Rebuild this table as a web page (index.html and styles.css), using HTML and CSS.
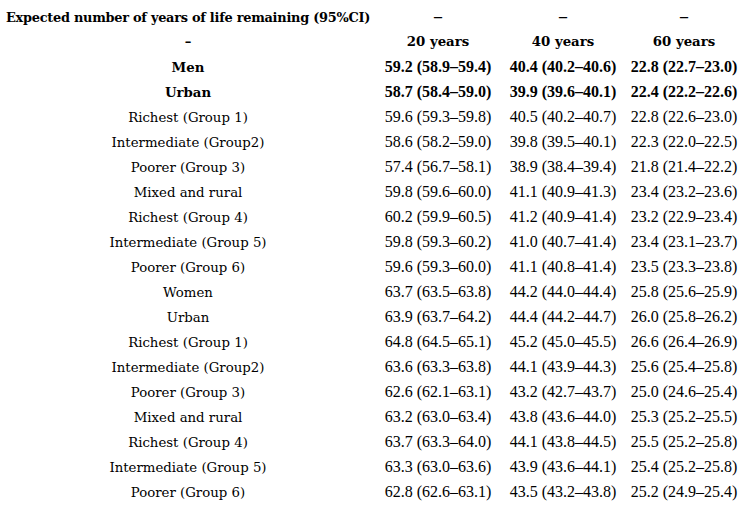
FILE: index.html
```html
<!DOCTYPE html>
<html lang="en">
<head>
<meta charset="utf-8">
<title>Expected number of years of life remaining</title>
<link rel="stylesheet" href="styles.css">
</head>
<body>
<table class="life">
  <colgroup>
    <col class="c-label">
    <col class="c-val">
    <col class="c-val2">
    <col class="c-val3">
  </colgroup>
  <thead>
    <tr class="bold">
      <th class="label title">Expected number of years of life remaining (95%CI)</th>
      <th class="num">–</th>
      <th class="num">–</th>
      <th class="num">–</th>
    </tr>
    <tr class="bold">
      <th class="label">–</th>
      <th class="label">20 years</th>
      <th class="label">40 years</th>
      <th class="label">60 years</th>
    </tr>
  </thead>
  <tbody>
    <tr class="bold"><td class="label">Men</td><td class="num">59.2 (58.9–59.4)</td><td class="num">40.4 (40.2–40.6)</td><td class="num">22.8 (22.7–23.0)</td></tr>
    <tr class="bold"><td class="label">Urban</td><td class="num">58.7 (58.4–59.0)</td><td class="num">39.9 (39.6–40.1)</td><td class="num">22.4 (22.2–22.6)</td></tr>
    <tr><td class="label">Richest (Group 1)</td><td class="num">59.6 (59.3–59.8)</td><td class="num">40.5 (40.2–40.7)</td><td class="num">22.8 (22.6–23.0)</td></tr>
    <tr><td class="label">Intermediate (Group2)</td><td class="num">58.6 (58.2–59.0)</td><td class="num">39.8 (39.5–40.1)</td><td class="num">22.3 (22.0–22.5)</td></tr>
    <tr><td class="label">Poorer (Group 3)</td><td class="num">57.4 (56.7–58.1)</td><td class="num">38.9 (38.4–39.4)</td><td class="num">21.8 (21.4–22.2)</td></tr>
    <tr><td class="label">Mixed and rural</td><td class="num">59.8 (59.6–60.0)</td><td class="num">41.1 (40.9–41.3)</td><td class="num">23.4 (23.2–23.6)</td></tr>
    <tr><td class="label">Richest (Group 4)</td><td class="num">60.2 (59.9–60.5)</td><td class="num">41.2 (40.9–41.4)</td><td class="num">23.2 (22.9–23.4)</td></tr>
    <tr><td class="label">Intermediate (Group 5)</td><td class="num">59.8 (59.3–60.2)</td><td class="num">41.0 (40.7–41.4)</td><td class="num">23.4 (23.1–23.7)</td></tr>
    <tr><td class="label">Poorer (Group 6)</td><td class="num">59.6 (59.3–60.0)</td><td class="num">41.1 (40.8–41.4)</td><td class="num">23.5 (23.3–23.8)</td></tr>
    <tr><td class="label">Women</td><td class="num">63.7 (63.5–63.8)</td><td class="num">44.2 (44.0–44.4)</td><td class="num">25.8 (25.6–25.9)</td></tr>
    <tr><td class="label">Urban</td><td class="num">63.9 (63.7–64.2)</td><td class="num">44.4 (44.2–44.7)</td><td class="num">26.0 (25.8–26.2)</td></tr>
    <tr><td class="label">Richest (Group 1)</td><td class="num">64.8 (64.5–65.1)</td><td class="num">45.2 (45.0–45.5)</td><td class="num">26.6 (26.4–26.9)</td></tr>
    <tr><td class="label">Intermediate (Group2)</td><td class="num">63.6 (63.3–63.8)</td><td class="num">44.1 (43.9–44.3)</td><td class="num">25.6 (25.4–25.8)</td></tr>
    <tr><td class="label">Poorer (Group 3)</td><td class="num">62.6 (62.1–63.1)</td><td class="num">43.2 (42.7–43.7)</td><td class="num">25.0 (24.6–25.4)</td></tr>
    <tr><td class="label">Mixed and rural</td><td class="num">63.2 (63.0–63.4)</td><td class="num">43.8 (43.6–44.0)</td><td class="num">25.3 (25.2–25.5)</td></tr>
    <tr><td class="label">Richest (Group 4)</td><td class="num">63.7 (63.3–64.0)</td><td class="num">44.1 (43.8–44.5)</td><td class="num">25.5 (25.2–25.8)</td></tr>
    <tr><td class="label">Intermediate (Group 5)</td><td class="num">63.3 (63.0–63.6)</td><td class="num">43.9 (43.6–44.1)</td><td class="num">25.4 (25.2–25.8)</td></tr>
    <tr><td class="label">Poorer (Group 6)</td><td class="num">62.8 (62.6–63.1)</td><td class="num">43.5 (43.2–43.8)</td><td class="num">25.2 (24.9–25.4)</td></tr>
  </tbody>
</table>
</body>
</html>
```

FILE: styles.css
```css
html, body {
  margin: 0;
  padding: 0;
  background: #ffffff;
  color: #000000;
}

body {
  padding-top: 8px;
}

.life {
  table-layout: fixed;
  width: 742px;
  border-collapse: collapse;
  border-spacing: 0;
}

.c-label { width: 376px; }
.c-val { width: 124px; }
.c-val2 { width: 126px; }
.c-val3 { width: 116px; }

.life tr {
  height: 25px;
}

.life th,
.life td {
  padding: 0;
  height: 25px;
  line-height: 18px;
  text-align: center;
  vertical-align: baseline;
  white-space: nowrap;
  font-weight: normal;
}

.label {
  font-family: "DejaVu Serif", serif;
  font-size: 13.3px;
}

.num {
  font-family: "Liberation Serif", serif;
  font-size: 16px;
}

.bold .label,
.bold .num {
  font-weight: bold;
}

.bold .title {
  font-size: 12.9px;
  letter-spacing: -0.25px;
}
```
